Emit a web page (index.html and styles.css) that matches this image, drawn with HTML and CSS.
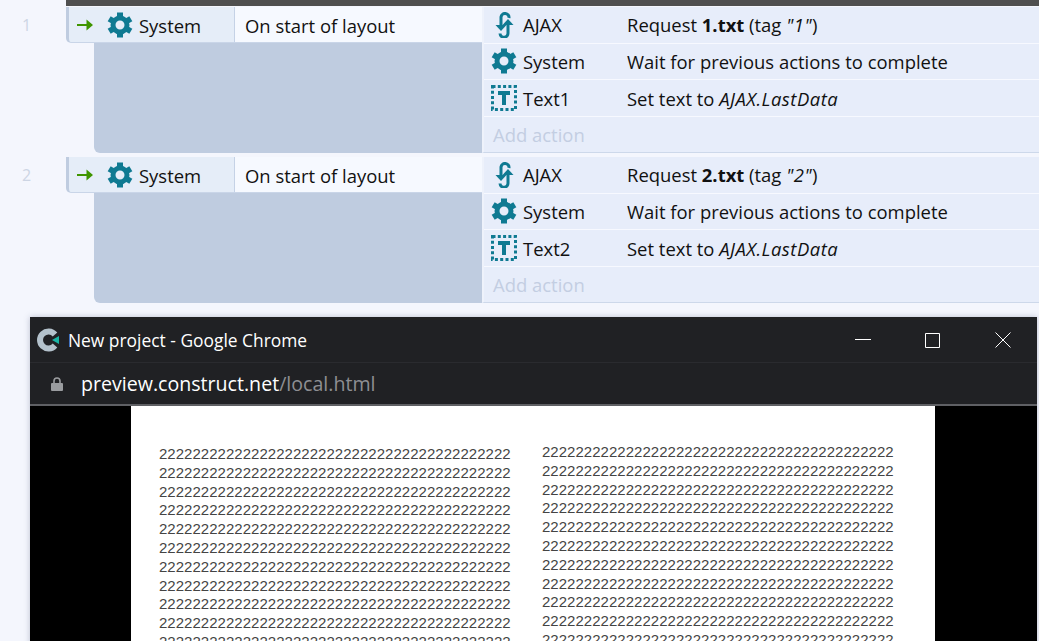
FILE: index.html
```html
<!DOCTYPE html>
<html lang="en">
<head>
<meta charset="utf-8">
<title>Event sheet</title>
<link rel="stylesheet" href="styles.css">
</head>
<body>
<svg class="defs" width="0" height="0" aria-hidden="true">
  <defs>
    <symbol id="gear" viewBox="0 0 26 26">
      <g fill="#0f7a92">
        <rect x="10" y="0.500" width="6" height="6"/>
        <rect x="10" y="0.500" width="6" height="6" transform="rotate(60 13 13)"/>
        <rect x="10" y="0.500" width="6" height="6" transform="rotate(120 13 13)"/>
        <rect x="10" y="0.500" width="6" height="6" transform="rotate(180 13 13)"/>
        <rect x="10" y="0.500" width="6" height="6" transform="rotate(240 13 13)"/>
        <rect x="10" y="0.500" width="6" height="6" transform="rotate(300 13 13)"/>
      </g>
      <circle cx="13" cy="13" r="7" fill="none" stroke="#0f7a92" stroke-width="5"/>
    </symbol>
    <symbol id="ajax" viewBox="0 0 20 26">
      <path fill="none" stroke="#0f7a92" stroke-width="3" d="M15 6A4 4 0 0 0 7 5V14"/>
      <path fill="#0f7a92" d="M1.500 13h11L7 19z"/>
      <path fill="none" stroke="#0f7a92" stroke-width="3" d="M14 12V21A4 4 0 0 1 6 21.500"/>
      <path fill="#0f7a92" d="M8.500 13h11L14 7z"/>
    </symbol>
    <symbol id="textobj" viewBox="0 0 26 26">
      <path fill="none" stroke="#0f7a92" stroke-width="3" stroke-dasharray="3 2.300" d="M1.500 1.500h23v23h-23z"/>
      <path fill="#0f7a92" d="M7 6h12v4h-4v10h-4V10H7z"/>
    </symbol>
    <symbol id="arrow" viewBox="0 0 16 14">
      <path fill="#3f9500" d="M0 6h9.500V1.500L16 7l-6.500 5.500V8H0z"/>
    </symbol>
  </defs>
</svg>

<main class="sheet">
  <section class="event event-one">
    <div class="rownum">1</div>
    <div class="event-body">
      <div class="left">
        <div class="condition">
          <svg class="arrow"><use href="#arrow"/></svg>
          <svg class="icon"><use href="#gear"/></svg>
          <span class="obj">System</span>
          <span class="cond-text">On start of layout</span>
        </div>
        <div class="sub"></div>
      </div>
      <div class="actions">
        <div class="action"><span class="cell-icon"><svg class="icon icon-ajax"><use href="#ajax"/></svg></span><span class="name">AJAX</span><span>Request <b>1.txt</b> (tag <i>"1"</i>)</span></div>
        <div class="action"><span class="cell-icon"><svg class="icon"><use href="#gear"/></svg></span><span class="name">System</span><span>Wait for previous actions to complete</span></div>
        <div class="action"><span class="cell-icon"><svg class="icon"><use href="#textobj"/></svg></span><span class="name">Text1</span><span>Set text to <i>AJAX.LastData</i></span></div>
        <div class="add">Add action</div>
      </div>
    </div>
  </section>

  <section class="event event-two">
    <div class="rownum">2</div>
    <div class="event-body">
      <div class="left">
        <div class="condition">
          <svg class="arrow"><use href="#arrow"/></svg>
          <svg class="icon"><use href="#gear"/></svg>
          <span class="obj">System</span>
          <span class="cond-text">On start of layout</span>
        </div>
        <div class="sub"></div>
      </div>
      <div class="actions">
        <div class="action"><span class="cell-icon"><svg class="icon icon-ajax"><use href="#ajax"/></svg></span><span class="name">AJAX</span><span>Request <b>2.txt</b> (tag <i>"2"</i>)</span></div>
        <div class="action"><span class="cell-icon"><svg class="icon"><use href="#gear"/></svg></span><span class="name">System</span><span>Wait for previous actions to complete</span></div>
        <div class="action"><span class="cell-icon"><svg class="icon"><use href="#textobj"/></svg></span><span class="name">Text2</span><span>Set text to <i>AJAX.LastData</i></span></div>
        <div class="add">Add action</div>
      </div>
    </div>
  </section>

  <section class="window">
    <div class="titlebar">
      <svg class="logo" viewBox="0 0 24 24" aria-hidden="true">
        <path fill="none" stroke="#b4c2cc" stroke-width="6" d="M19 6.500A8.500 8.500 0 1 0 19 17.500"/>
        <path fill="#19b5a5" d="M23 8v8l-7-4z"/>
      </svg>
      <span class="title">New project - Google Chrome</span>
      <div class="controls">
        <svg class="ctl" viewBox="0 0 16 16"><path stroke="#fff" d="M0 7.500h16"/></svg>
        <svg class="ctl" viewBox="0 0 16 16"><path fill="none" stroke="#fff" d="M.5 1.500h14v14H.5z"/></svg>
        <svg class="ctl" viewBox="0 0 16 16"><path stroke="#fff" d="M.5.500l15 15M15.500.500l-15 15"/></svg>
      </div>
    </div>
    <div class="urlbar">
      <svg class="lock" viewBox="0 0 12 14"><path fill="#9a9c9f" d="M1 6h10a1 1 0 0 1 1 1v6a1 1 0 0 1-1 1H1a1 1 0 0 1-1-1V7a1 1 0 0 1 1-1z"/><path fill="none" stroke="#9a9c9f" stroke-width="1.600" d="M3 6.500V4a3 3 0 0 1 6 0v2.500"/></svg>
      <span class="url"><span class="host">preview.construct.net</span><span class="path">/local.html</span></span>
    </div>
    <div class="viewport">
      <div class="paper">
        <div class="column col-a">
          <div>222222222222222222222222222222222222222222</div>
          <div>222222222222222222222222222222222222222222</div>
          <div>222222222222222222222222222222222222222222</div>
          <div>222222222222222222222222222222222222222222</div>
          <div>222222222222222222222222222222222222222222</div>
          <div>222222222222222222222222222222222222222222</div>
          <div>222222222222222222222222222222222222222222</div>
          <div>222222222222222222222222222222222222222222</div>
          <div>222222222222222222222222222222222222222222</div>
          <div>222222222222222222222222222222222222222222</div>
          <div>222222222222222222222222222222222222222222</div>
        </div>
        <div class="column col-b">
          <div>222222222222222222222222222222222222222222</div>
          <div>222222222222222222222222222222222222222222</div>
          <div>222222222222222222222222222222222222222222</div>
          <div>222222222222222222222222222222222222222222</div>
          <div>222222222222222222222222222222222222222222</div>
          <div>222222222222222222222222222222222222222222</div>
          <div>222222222222222222222222222222222222222222</div>
          <div>222222222222222222222222222222222222222222</div>
          <div>222222222222222222222222222222222222222222</div>
          <div>222222222222222222222222222222222222222222</div>
          <div>222222222222222222222222222222222222222222</div>
        </div>
      </div>
    </div>
  </section>
</main>
</body>
</html>
```
FILE: styles.css
```css
* { box-sizing: border-box; }
html, body { margin: 0; height: 100%; overflow: hidden; }
body {
  background: #f4f6fd;
  font-family: "Open Sans", "Noto Sans", "Liberation Sans", sans-serif;
  font-size: 18.450px;
  color: #111;
}
.defs { position: absolute; }
.sheet { height: 641px; overflow: hidden; display: flex; flex-direction: column; }

.event { display: flex; flex: none; }
.event-one { height: 153px; border-top: 6px solid transparent; position: relative; }
.event-one::before {
  content: "";
  position: absolute;
  left: 66px; right: 0; top: -6px;
  height: 6px;
  background: #4f4f4f;
}
.event-two { height: 147px; margin-top: 3px; }
.rownum {
  width: 66px;
  padding: 8px 0 0 22px;
  color: #cdd5e4;
  font-size: 16px;
  line-height: 22px;
}
.event-body { flex: 1; display: flex; padding-top: 1px; }
.left { width: 416px; display: flex; flex-direction: column; flex: none; }
.condition {
  height: 36px;
  flex: none;
  display: flex;
  align-items: center;
  background: #e5edf8;
  border-left: 3px solid #bfcce0;
  border-bottom: 1px solid #c9d5e8;
  border-radius: 0 0 0 5px;
}
.arrow { width: 16px; height: 14px; margin: 0 14px 0 8px; flex: none; }
.icon { width: 26px; height: 26px; flex: none; }
.obj { width: 101px; padding: 2px 0 0 6px; flex: none; }
.cond-text {
  flex: 1;
  align-self: stretch;
  display: flex;
  align-items: center;
  padding: 2px 0 0 10px;
  background: #f6f9ff;
  border-left: 1px solid #c5d2e6;
}
.sub {
  flex: 1;
  margin-left: 28px;
  background: #bfcce0;
  border-radius: 0 0 0 6px;
}
.actions {
  flex: 1;
  display: flex;
  flex-direction: column;
  gap: 1px;
  background: #f7f9ff;
  border-left: 2px solid #eef2fb;
  border-bottom: 1px solid #cdd8ea;
}
.action, .add { background: #e7edfa; display: flex; align-items: center; height: 35.670px; flex: none; }
.action i { letter-spacing: .5px; }
.add { flex: 1; padding-left: 9px; color: #c3cee2; }
.cell-icon { width: 39px; display: flex; justify-content: center; flex: none; }
.icon-ajax { width: 20px; }
.name { width: 104px; flex: none; }

.window {
  margin: 14px 0 0 30px;
  width: 1007px;
  flex: none;
  display: flex;
  flex-direction: column;
  background: #202124;
  box-shadow: 0 0 6px rgba(80, 90, 120, .35);
}
.titlebar {
  height: 46px;
  display: flex;
  align-items: center;
  padding-left: 6px;
  border-bottom: 1px solid #2a2b2f;
  color: #fff;
  font-size: 17.400px;
}
.logo { width: 24px; height: 24px; margin-right: 8px; flex: none; }
.title { flex: 1; }
.controls { display: flex; gap: 54px; padding-right: 26px; }
.ctl { width: 16px; height: 16px; }
.urlbar {
  height: 43px;
  display: flex;
  align-items: center;
  padding-left: 21px;
  font-size: 19.600px;
  border-bottom: 2px solid #5f6064;
}
.lock { width: 12px; height: 14px; margin-right: 18px; }
.host { color: #fff; }
.path { color: #8e8f93; }
.viewport { background: #000; display: flex; justify-content: center; height: 240px; padding-right: 1px; }
.paper {
  width: 804px;
  background: #fff;
  display: flex;
  font: 15px/18.800px "Liberation Sans", Arial, sans-serif;
  letter-spacing: .03px;
  color: #444;
  overflow: hidden;
  white-space: nowrap;
}
.col-a { width: 383px; margin-left: 28px; padding-top: 39px; }
.col-b { padding-top: 37px; }
```
